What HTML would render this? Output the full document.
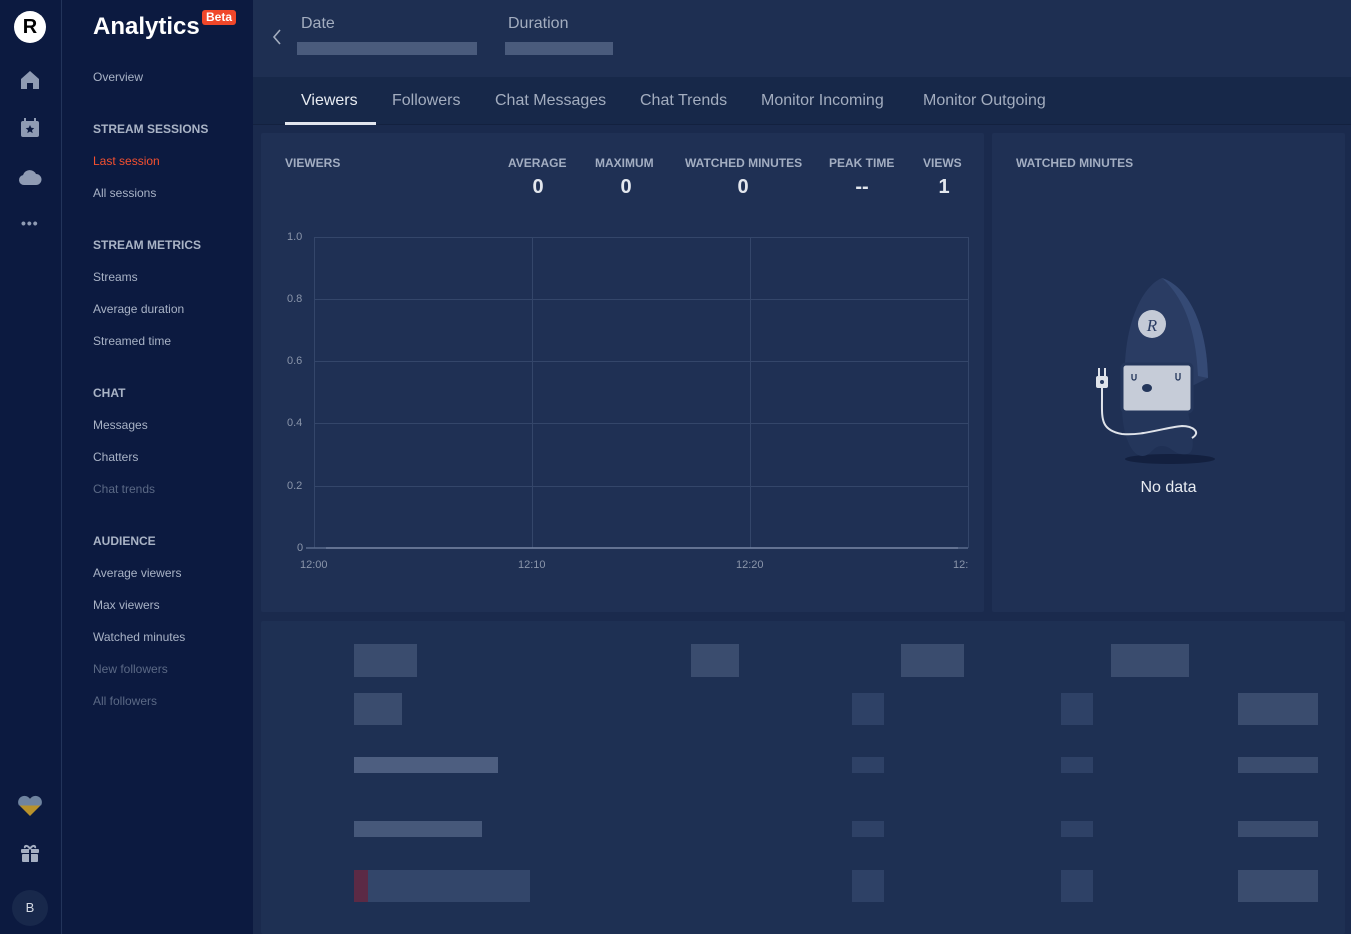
<!DOCTYPE html>
<html><head><meta charset="utf-8"><style>
*{margin:0;padding:0;box-sizing:border-box}
body{width:1351px;height:934px;overflow:hidden;background:#1a2a4d;font-family:"Liberation Sans",sans-serif;position:relative}
.rail{position:absolute;left:0;top:0;width:62px;height:934px;background:#0c1a40;border-right:1px solid #23345a}
.nav{position:absolute;left:62px;top:0;width:191px;height:934px;background:#0c1a40}
.nav .t{position:absolute;left:31px;font-size:12px;color:#a9b3c6}
.nav .h{font-weight:bold;color:#aab4c6}
.nav .d{color:#5b6985}
.hdr{position:absolute;left:253px;top:0;width:1098px;height:77px;background:#1e2f52}
.tabs{position:absolute;left:253px;top:77px;width:1098px;height:48px;background:#172849;border-bottom:1px solid #13213f}
.tab{position:absolute;top:15px;font-size:16px;color:#a3adbf}
.panel{position:absolute;background:#1f3054;border-radius:2px}
.lbl{position:absolute;font-size:12px;font-weight:bold;color:#a3aec2}
.val{position:absolute;font-size:20px;font-weight:bold;color:#e3e7ee;text-align:center}
.ax{position:absolute;font-size:11px;color:#8a95aa}
.blur{position:absolute;background:#3a4c6e}
</style></head><body>
<div class="rail">
 <div style="position:absolute;left:14px;top:11px;width:32px;height:32px;border-radius:50%;background:#fff;color:#000;font-weight:bold;font-size:20px;text-align:center;line-height:32px">R</div>
 <svg style="position:absolute;left:20px;top:70px" width="20" height="20" viewBox="0 0 20 20"><path d="M1 9L10 1l9 8v10h-6v-6H7v6H1z" fill="#8f9bb3"/></svg>
 <svg style="position:absolute;left:20px;top:118px" width="20" height="20" viewBox="0 0 20 20"><rect x="1" y="3" width="18" height="16" rx="2" fill="#8f9bb3"/><rect x="4" y="0" width="2" height="5" fill="#8f9bb3"/><rect x="14" y="0" width="2" height="5" fill="#8f9bb3"/><path d="M10 7l1.3 2.8 3 .3-2.3 2 .7 3-2.7-1.6-2.7 1.6.7-3-2.3-2 3-.3z" fill="#0c1a40"/></svg>
 <svg style="position:absolute;left:18px;top:168px" width="24" height="18" viewBox="0 0 24 18"><path d="M6 17a5 5 0 0 1-1-9.9A7 7 0 0 1 18 6a5.5 5.5 0 0 1 0 11z" fill="#8f9bb3"/></svg>
 <div style="position:absolute;left:21px;top:215px;color:#8f9bb3;font-size:14px;letter-spacing:1px;font-weight:bold">•••</div>
 <svg style="position:absolute;left:18px;top:795px" width="24" height="22" viewBox="0 0 24 22"><path d="M12 21L2 11A5.5 5.5 0 0 1 12 4a5.5 5.5 0 0 1 10 7z" fill="#b8922c"/><path d="M1 10.5A5.5 5.5 0 0 1 12 4a5.5 5.5 0 0 1 11 6.5z" fill="#6f84a0"/></svg>
 <svg style="position:absolute;left:20px;top:843px" width="20" height="20" viewBox="0 0 20 20"><rect x="1" y="6" width="18" height="4" rx="1" fill="#a5afc2"/><rect x="2" y="11" width="16" height="8" rx="1" fill="#a5afc2"/><rect x="9" y="6" width="2" height="13" fill="#0c1a40"/><path d="M10 6C8 2 4 2 5 5M10 6c2-4 6-4 5-1" stroke="#a5afc2" stroke-width="2" fill="none"/></svg>
 <div style="position:absolute;left:12px;top:890px;width:36px;height:36px;border-radius:50%;background:#18284b;color:#d5dae4;font-size:13px;text-align:center;line-height:36px">B</div>
</div>
<div class="nav">
 <div style="position:absolute;left:31px;top:13px;font-size:24px;font-weight:bold;color:#fff">Analytics</div>
 <div style="position:absolute;left:140px;top:10px;background:#f0472a;color:#fff;font-size:12px;font-weight:bold;padding:0 4px;border-radius:3px;line-height:15px">Beta</div>
 <div class="t" style="top:70px">Overview</div>
 <div class="t h" style="top:122px">STREAM SESSIONS</div>
 <div class="t" style="top:154px;color:#f5502f">Last session</div>
 <div class="t" style="top:186px">All sessions</div>
 <div class="t h" style="top:238px">STREAM METRICS</div>
 <div class="t" style="top:270px">Streams</div>
 <div class="t" style="top:302px">Average duration</div>
 <div class="t" style="top:334px">Streamed time</div>
 <div class="t h" style="top:386px">CHAT</div>
 <div class="t" style="top:418px">Messages</div>
 <div class="t" style="top:450px">Chatters</div>
 <div class="t d" style="top:482px">Chat trends</div>
 <div class="t h" style="top:534px">AUDIENCE</div>
 <div class="t" style="top:566px">Average viewers</div>
 <div class="t" style="top:598px">Max viewers</div>
 <div class="t" style="top:630px">Watched minutes</div>
 <div class="t d" style="top:662px">New followers</div>
 <div class="t d" style="top:694px">All followers</div>
</div>
<div class="hdr">
 <svg style="position:absolute;left:19px;top:29px" width="10" height="16" viewBox="0 0 10 16"><path d="M8 1L2 8l6 7" stroke="#a3adbf" stroke-width="1.6" fill="none"/></svg>
 <div style="position:absolute;left:48px;top:15px;font-size:16px;color:#a3adbf">Date</div>
 <div style="position:absolute;left:255px;top:15px;font-size:16px;color:#a3adbf">Duration</div>
 <div class="blur" style="left:44px;top:42px;width:180px;height:13px;background:#4a5b7c"></div>
 <div class="blur" style="left:252px;top:42px;width:108px;height:13px;background:#4a5b7c"></div>
</div>
<div class="tabs">
 <div class="tab" style="left:48px;color:#e8ecf2">Viewers</div>
 <div style="position:absolute;left:32px;top:45px;width:91px;height:3px;background:#e2e6ee"></div>
 <div class="tab" style="left:139px">Followers</div>
 <div class="tab" style="left:242px">Chat Messages</div>
 <div class="tab" style="left:387px">Chat Trends</div>
 <div class="tab" style="left:508px">Monitor Incoming</div>
 <div class="tab" style="left:670px">Monitor Outgoing</div>
</div>
<div class="panel" style="left:261px;top:133px;width:723px;height:479px">
 <div class="lbl" style="left:24px;top:23px">VIEWERS</div>
 <div class="lbl" style="left:247px;top:23px">AVERAGE</div>
 <div class="lbl" style="left:334px;top:23px">MAXIMUM</div>
 <div class="lbl" style="left:424px;top:23px">WATCHED MINUTES</div>
 <div class="lbl" style="left:568px;top:23px">PEAK TIME</div>
 <div class="lbl" style="left:662px;top:23px">VIEWS</div>
 <div class="val" style="left:247px;width:60px;top:43px">0</div>
 <div class="val" style="left:335px;width:60px;top:43px">0</div>
 <div class="val" style="left:452px;width:60px;top:43px">0</div>
 <div class="val" style="left:571px;width:60px;top:43px">--</div>
 <div class="val" style="left:653px;width:60px;top:43px">1</div>
</div>
<svg style="position:absolute;left:261px;top:133px" width="723" height="479">
 <g stroke="#34466a" stroke-width="1">
  <line x1="53" y1="104.5" x2="707" y2="104.5"/><line x1="53" y1="166.5" x2="707" y2="166.5"/><line x1="53" y1="228.5" x2="707" y2="228.5"/><line x1="53" y1="290.5" x2="707" y2="290.5"/><line x1="53" y1="353.5" x2="707" y2="353.5"/>
  <line x1="53.5" y1="104" x2="53.5" y2="415"/><line x1="271.5" y1="104" x2="271.5" y2="415"/><line x1="489.5" y1="104" x2="489.5" y2="415"/><line x1="707.5" y1="104" x2="707.5" y2="415"/>
 </g>
 <line x1="45" y1="415" x2="707" y2="415" stroke="#5a6b8c" stroke-width="1.5"/>
 <line x1="65" y1="415" x2="697" y2="415" stroke="#8a98b3" stroke-width="1"/>
</svg>
<div class="ax" style="left:287px;top:231px">1.0</div>
<div class="ax" style="left:287px;top:293px">0.8</div>
<div class="ax" style="left:287px;top:355px">0.6</div>
<div class="ax" style="left:287px;top:417px">0.4</div>
<div class="ax" style="left:287px;top:480px">0.2</div>
<div class="ax" style="left:297px;top:542px">0</div>
<div class="ax" style="left:300px;top:559px">12:00</div>
<div class="ax" style="left:518px;top:559px">12:10</div>
<div class="ax" style="left:736px;top:559px">12:20</div>
<div class="ax" style="left:953px;top:559px">12:</div>
<div class="panel" style="left:992px;top:133px;width:353px;height:479px">
 <div class="lbl" style="left:24px;top:23px">WATCHED MINUTES</div>
 <svg style="position:absolute;left:100px;top:143px" width="150" height="190" viewBox="0 0 150 190">
  <ellipse cx="78" cy="183" rx="45" ry="5" fill="#13203f"/>
  <path d="M33 110C30 50 50 10 70 2c25 8 45 45 46 100l-20 10z" fill="#2a3c63"/>
  <path d="M70 2c25 8 45 45 46 100l-10 -2C104 50 90 20 70 2z" fill="#354a75"/>
  <path d="M30 130c0 30 10 50 20 50 10 0 10-10 20-10 10 0 12 10 25 8 10-2 5-20 0-48z" fill="#24365b"/>
  <circle cx="60" cy="48" r="14" fill="#c4cad6"/>
  <text x="60" y="55" font-size="17" font-family="Liberation Serif,serif" font-style="italic" fill="#2a3c63" text-anchor="middle">R</text>
  <rect x="30" y="88" width="70" height="48" rx="4" fill="#c6ccd8" stroke="#24365b" stroke-width="3"/>
  <path d="M40 98v4a2 2 0 0 0 4 0v-4M84 97v5a2 2 0 0 0 4 0v-5" stroke="#24365b" stroke-width="1.3" fill="none"/>
  <ellipse cx="55" cy="112" rx="5" ry="4" fill="#24365b"/>
  <path d="M10 110v12c0 20-2 32 20 36 20 2 40-6 60-8 10 0 20 6 10 12" stroke="#dfe3ea" stroke-width="2" fill="none"/>
  <rect x="4" y="100" width="12" height="12" rx="2" fill="#dfe3ea"/>
  <rect x="6" y="92" width="2" height="8" fill="#dfe3ea"/><rect x="12" y="92" width="2" height="8" fill="#dfe3ea"/>
  <circle cx="10" cy="106" r="2" fill="#2a3c63"/>
 </svg>
 <div style="position:absolute;left:0;width:353px;top:346px;text-align:center;color:#e8ecf2;font-size:16px">No data</div>
</div>
<div class="panel" style="left:261px;top:621px;width:1084px;height:313px;background:#1e3053">
 <div class="blur" style="left:93px;top:23px;width:63px;height:33px"></div>
 <div class="blur" style="left:430px;top:23px;width:48px;height:33px"></div>
 <div class="blur" style="left:640px;top:23px;width:63px;height:33px"></div>
 <div class="blur" style="left:850px;top:23px;width:78px;height:33px"></div>
 <div class="blur" style="left:93px;top:72px;width:48px;height:32px"></div>
 <div class="blur" style="left:93px;top:136px;width:144px;height:16px;background:#4d5e80"></div>
 <div class="blur" style="left:93px;top:200px;width:128px;height:16px;background:#46587a"></div>
 <div class="blur" style="left:93px;top:249px;width:176px;height:32px;background:#33466a"></div>
 <div style="position:absolute;left:93px;top:249px;width:14px;height:32px;background:#5b2a45"></div>
 <div class="blur" style="left:591px;top:72px;width:32px;height:32px;background:#2e4166"></div>
 <div class="blur" style="left:800px;top:72px;width:32px;height:32px;background:#2e4166"></div>
 <div class="blur" style="left:977px;top:72px;width:80px;height:32px"></div>
 <div class="blur" style="left:591px;top:136px;width:32px;height:16px;background:#2e4166"></div>
 <div class="blur" style="left:800px;top:136px;width:32px;height:16px;background:#2e4166"></div>
 <div class="blur" style="left:977px;top:136px;width:80px;height:16px"></div>
 <div class="blur" style="left:591px;top:200px;width:32px;height:16px;background:#2e4166"></div>
 <div class="blur" style="left:800px;top:200px;width:32px;height:16px;background:#2e4166"></div>
 <div class="blur" style="left:977px;top:200px;width:80px;height:16px"></div>
 <div class="blur" style="left:591px;top:249px;width:32px;height:32px;background:#2e4166"></div>
 <div class="blur" style="left:800px;top:249px;width:32px;height:32px;background:#2e4166"></div>
 <div class="blur" style="left:977px;top:249px;width:80px;height:32px"></div>
</div>
</body></html>
